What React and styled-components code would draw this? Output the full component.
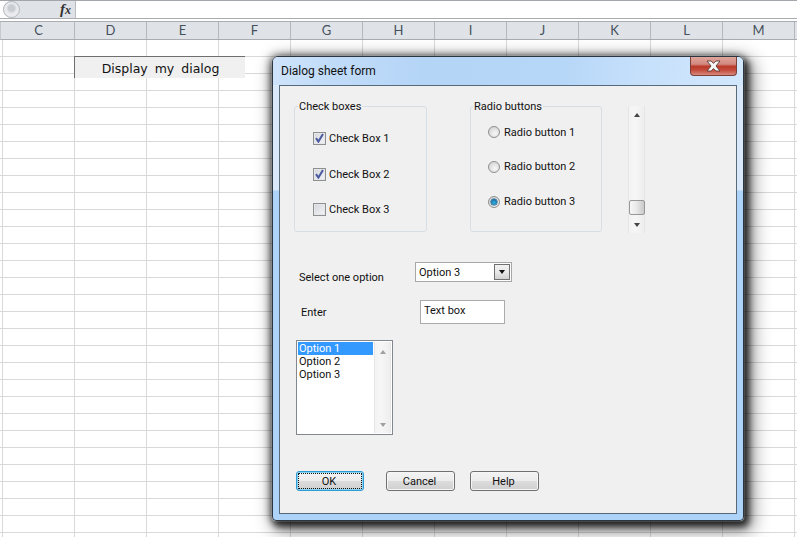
import styled, { createGlobalStyle } from "styled-components";

const UI_FONT = `Roboto, "Noto Sans", "Liberation Sans", sans-serif`;

const GlobalStyle = createGlobalStyle`
  html, body {
    margin: 0;
    background: #fff;
    overflow: hidden;
  }
  * {
    box-sizing: border-box;
  }
`;

const Page = styled.div`
  position: relative;
  width: 797px;
  height: 537px;
  overflow: hidden;
  background: #fff;
`;

// Excel chrome
const FormulaBar = styled.div`
  display: flex;
  height: 19px;
  border-top: 1px solid #a3a6aa;
  border-bottom: 1px solid #a9acb0;
`;

const NameBox = styled.div`
  display: flex;
  align-items: center;
  justify-content: space-between;
  width: 73px;
  margin-left: 3px;
  padding-right: 4px;
  background: #dfe2e7;
  border-right: 1px solid #b9bcc1;
  border-radius: 9px 0 0 9px;
`;

const Grip = styled.span`
  width: 17px;
  height: 17px;
  border-radius: 50%;
  border: 1px solid #b4b7bb;
  background: radial-gradient(circle at 50% 42%, #c9ccd0 0 3px, #e6e8eb 5px, #f1f2f4 100%);
`;

const Fx = styled.span`
  font: italic bold 15px "Liberation Serif", serif;
  color: #333;
  line-height: 15px;
`;

const FxSub = styled.span`
  font-size: 12px;
`;

const Gutter = styled.div`
  height: 3px;
  background: #fff;
  border-bottom: 1px solid #a9acb0;
`;

const HeaderRow = styled.div`
  display: flex;
  height: 18px;
  padding-left: 2px;
  background: #dfe3e8;
  border-bottom: 1px solid #a8abaf;
  border-left: 1px solid #c6c9cd;
`;

const HeaderCell = styled.div`
  flex: 0 0 72px;
  text-align: center;
  font: 13px/16px Lato, "Liberation Sans", sans-serif;
  color: #46505c;
  border-right: 1px solid #b4b8bd;
`;

const Sheet = styled.div`
  height: 497px;
  background-color: #fff;
  background-image: linear-gradient(to right, #d9d9d9 1px, transparent 1px),
    linear-gradient(to bottom, #d9d9d9 1px, transparent 1px);
  background-size: 72px 17px;
  background-position: 2px 16px;
`;

const SheetButton = styled.button`
  position: absolute;
  left: 74px;
  top: 56px;
  width: 171px;
  height: 22px;
  padding: 1px 0 0 1px;
  background: #f0f0f0;
  border: 0;
  border-top: 1px solid #6f6f6f;
  border-left: 1px solid #6f6f6f;
  font: 12.5px "DejaVu Sans", sans-serif;
  word-spacing: 3px;
  color: #111;
`;

// Dialog window
const Window = styled.div`
  position: absolute;
  left: 272px;
  top: 56px;
  width: 472px;
  height: 465px;
  padding: 0 6px 6px;
  border: 1px solid #2b3640;
  border-radius: 6px 6px 4px 4px;
  background: linear-gradient(180deg, #d9e9fa 0 133px, #aed3f8 134px);
  box-shadow: 0 0 0 1px rgba(255, 255, 255, 0.15), 3px 4px 7px 2px rgba(0, 0, 0, 0.75),
    5px 6px 18px 4px rgba(0, 0, 0, 0.45), -2px -1px 8px rgba(0, 0, 0, 0.4);
`;

const TitleBar = styled.div`
  display: flex;
  justify-content: space-between;
  height: 28px;
  margin: 0 -6px;
  padding: 0 6px 0 8px;
  border-radius: 5px 5px 0 0;
  background: linear-gradient(
    97deg,
    #cfe4fb 0,
    #c1dcf9 12%,
    #b5d5f7 32%,
    #b7d7f8 62%,
    #c6e0fb 78%,
    #d2e7fc 100%
  );
`;

const TitleText = styled.div`
  font: 12px/29px ${UI_FONT};
  color: #111;
`;

const CloseButton = styled.div`
  display: flex;
  align-items: center;
  justify-content: center;
  width: 47px;
  height: 19px;
  border: 1px solid #7b3f3a;
  border-top: 0;
  border-radius: 0 0 4px 4px;
  background: linear-gradient(
    180deg,
    #dfa69c 0,
    #d3887e 40%,
    #bb3a2b 52%,
    #c2493a 72%,
    #d98a7e 100%
  );
`;

const Client = styled.div`
  height: 429px;
  padding: 14px 0 0 14px;
  background: #f0f0f0;
  border: 1px solid #566a7c;
  font: 11px ${UI_FONT};
  color: #111;
`;

const TopRow = styled.div`
  display: flex;
  align-items: flex-start;
`;

const Group = styled.fieldset`
  width: ${(p) => p.$width}px;
  height: 132px;
  margin: 0 0 0 ${(p) => p.$offset}px;
  padding: 0;
  border: 1px solid #d5dfe5;
  border-radius: 3px;
  min-width: 0;
`;

const Legend = styled.legend`
  margin-left: ${(p) => p.$inset}px;
  padding: 0 1px;
  font: 11px/13px ${UI_FONT};
`;

const OptionList = styled.div`
  padding: ${(p) => p.$top}px 0 0 ${(p) => p.$left}px;
`;

const OptionRow = styled.label`
  display: flex;
  align-items: center;
  height: ${(p) => p.$height}px;
  gap: ${(p) => p.$gap}px;
`;

const CheckBox = styled.span`
  display: flex;
  align-items: center;
  justify-content: center;
  width: 13px;
  height: 13px;
  background: linear-gradient(135deg, #d4d6dc, #f4f4f6);
  border: 1px solid #8e8f8f;
  box-shadow: inset 0 0 0 1px #e6e7ea;
`;

const Radio = styled.span`
  display: flex;
  align-items: center;
  justify-content: center;
  width: 12px;
  height: 12px;
  border: 1px solid #8e8f8f;
  border-radius: 50%;
  background: radial-gradient(circle at 60% 65%, #f7f7f7, #cccccc);
  &::after {
    content: "";
    display: ${(p) => (p.$on ? "block" : "none")};
    width: 6px;
    height: 6px;
    border-radius: 50%;
    background: radial-gradient(circle at 50% 60%, #38b4e6, #0d5f96 80%);
    box-shadow: 0 0 0 0.5px #134f78;
  }
`;

const ScrollTrack = styled.div`
  display: flex;
  flex-direction: column;
  align-items: center;
  width: ${(p) => p.$width}px;
  height: ${(p) => p.$height}px;
  margin-left: ${(p) => p.$offset || 0}px;
  margin-top: ${(p) => p.$drop || 0}px;
  padding: ${(p) => p.$pad || 7}px 0 6px;
  background: linear-gradient(90deg, #f3f3f3, #f6f6f6 40%, #eeeeee);
  border-left: 1px solid #e6e6e6;
  border-right: 1px solid #e6e6e6;
`;

const Arrow = styled.span`
  width: 0;
  height: 0;
  border-left: 3.5px solid transparent;
  border-right: 3.5px solid transparent;
  ${(p) => (p.$dir === "up" ? "border-bottom" : "border-top")}: 4px solid ${(p) => p.$color};
`;

const ScrollFill = styled.div`
  flex: 1;
`;

const ScrollThumb = styled.div`
  width: 16px;
  height: 15px;
  margin-bottom: 8px;
  border: 1px solid #979797;
  border-radius: 2px;
  background: linear-gradient(90deg, #f6f6f6, #e9e9e9 45%, #c9c9c9);
`;

const FieldRow = styled.div`
  display: flex;
  align-items: flex-start;
  height: ${(p) => p.$height}px;
  margin-top: ${(p) => p.$top}px;
  padding-left: ${(p) => p.$indent}px;
`;

const FieldLabel = styled.label`
  width: ${(p) => p.$width}px;
  margin-top: ${(p) => p.$drop}px;
  line-height: 14px;
`;

const Combo = styled.div`
  display: flex;
  align-items: stretch;
  justify-content: space-between;
  width: 97px;
  height: 20px;
  background: #fff;
  border: 1px solid #a7a7a7;
  padding: 1px;
  line-height: 17px;
`;

const ComboValue = styled.span`
  padding-left: 2px;
`;

const ComboButton = styled.span`
  display: flex;
  align-items: center;
  justify-content: center;
  width: 16px;
  border: 1px solid #707070;
  background: linear-gradient(180deg, #f2f2f2, #e8e8e8 50%, #d0d0d0);
`;

const TextBox = styled.div`
  width: 85px;
  height: 24px;
  padding: 2px 0 0 3px;
  background: #fff;
  border: 1px solid #ababab;
  line-height: 15px;
`;

const ListBox = styled.div`
  display: flex;
  width: 97px;
  height: 95px;
  margin: 16px 0 0 2px;
  padding: 1px;
  background: #fff;
  border: 1px solid #828790;
`;

const ListItems = styled.div`
  flex: 1;
  line-height: 14px;
`;

const ListItem = styled.div`
  height: 13px;
  padding-left: 1px;
  margin-right: 1px;
  background: ${(p) => (p.$selected ? "#3399ff" : "transparent")};
  color: ${(p) => (p.$selected ? "#fff" : "#111")};
`;

const ButtonRow = styled.div`
  display: flex;
  margin: 36px 0 0 2px;
`;

const PushButton = styled.button`
  width: ${(p) => p.$width}px;
  height: 20px;
  margin-left: ${(p) => p.$offset || 0}px;
  padding: 0 2px 0 0;
  font: 11px ${UI_FONT};
  color: #111;
  border-radius: 3px;
  border: 1px solid ${(p) => (p.$focused ? "#2f9bd4" : "#707070")};
  background: linear-gradient(180deg, #f3f3f3 0, #ececec 48%, #dcdcdc 52%, #cfcfcf 100%);
  box-shadow: inset 0 0 0 1px ${(p) => (p.$focused ? "#86d3f3" : "#f6f6f6")};
  ${(p) => p.$focused && "outline: 1px dotted #111; outline-offset: -3px;"}
`;

const columns = ["C", "D", "E", "F", "G", "H", "I", "J", "K", "L", "M"];
const checks = [
  { label: "Check Box 1", on: true, height: 36 },
  { label: "Check Box 2", on: true, height: 36 },
  { label: "Check Box 3", on: false, height: 35 },
];
const radios = [
  { label: "Radio button 1", on: false, height: 34 },
  { label: "Radio button 2", on: false, height: 35 },
  { label: "Radio button 3", on: true, height: 35 },
];

const Tick = () => (
  <svg width="9" height="10" viewBox="0 0 9 10">
    <path d="M1 5.2 L3.4 8.6 L8 1" fill="none" stroke="#4a5aa0" strokeWidth="2" />
  </svg>
);

const CloseGlyph = () => (
  <svg width="17" height="12" viewBox="0 0 17 12">
    <path
      d="M2 1 H6.2 L8.5 3.4 L10.8 1 H15 L11 6 L15 11 H10.8 L8.5 8.6 L6.2 11 H2 L6 6 Z"
      fill="#f6f6f6"
      stroke="#5a3a3a"
      strokeWidth="0.9"
    />
  </svg>
);

export default function App() {
  return (
    <Page>
      <GlobalStyle />
      <FormulaBar>
        <NameBox>
          <Grip />
          <Fx>
            f<FxSub>x</FxSub>
          </Fx>
        </NameBox>
      </FormulaBar>
      <Gutter />
      <HeaderRow>
        {columns.map((c) => (
          <HeaderCell key={c}>{c}</HeaderCell>
        ))}
      </HeaderRow>
      <Sheet />
      <SheetButton>Display my dialog</SheetButton>

      <Window>
        <TitleBar>
          <TitleText>Dialog sheet form</TitleText>
          <CloseButton>
            <CloseGlyph />
          </CloseButton>
        </TitleBar>
        <Client>
          <TopRow>
            <Group $width={133} $offset={0}>
              <Legend $inset={3}>Check boxes</Legend>
              <OptionList $top={7} $left={18}>
                {checks.map((c) => (
                  <OptionRow key={c.label} $height={c.height} $gap={3}>
                    <CheckBox>{c.on && <Tick />}</CheckBox>
                    {c.label}
                  </OptionRow>
                ))}
              </OptionList>
            </Group>
            <Group $width={132} $offset={43}>
              <Legend $inset={2}>Radio buttons</Legend>
              <OptionList $top={2} $left={17}>
                {radios.map((r) => (
                  <OptionRow key={r.label} $height={r.height} $gap={4}>
                    <Radio $on={r.on} />
                    {r.label}
                  </OptionRow>
                ))}
              </OptionList>
            </Group>
            <ScrollTrack $width={17} $height={127} $offset={26} $drop={6}>
              <Arrow $dir="up" $color="#444" />
              <ScrollFill />
              <ScrollThumb />
              <Arrow $dir="down" $color="#444" />
            </ScrollTrack>
          </TopRow>

          <FieldRow $top={29} $indent={5} $height={20}>
            <FieldLabel $width={116} $drop={9}>
              Select one option
            </FieldLabel>
            <Combo>
              <ComboValue>Option 3</ComboValue>
              <ComboButton>
                <Arrow $dir="down" $color="#111" />
              </ComboButton>
            </Combo>
          </FieldRow>
          <FieldRow $top={18} $indent={7} $height={24}>
            <FieldLabel $width={119} $drop={6}>
              Enter
            </FieldLabel>
            <TextBox>Text box</TextBox>
          </FieldRow>

          <ListBox>
            <ListItems>
              <ListItem $selected>Option 1</ListItem>
              <ListItem>Option 2</ListItem>
              <ListItem>Option 3</ListItem>
            </ListItems>
            <ScrollTrack $width={17} $height={91} $pad={8}>
              <Arrow $dir="up" $color="#a0a0a0" />
              <ScrollFill />
              <Arrow $dir="down" $color="#a0a0a0" />
            </ScrollTrack>
          </ListBox>

          <ButtonRow>
            <PushButton $width={68} $focused>
              OK
            </PushButton>
            <PushButton $width={69} $offset={22}>
              Cancel
            </PushButton>
            <PushButton $width={69} $offset={15}>
              Help
            </PushButton>
          </ButtonRow>
        </Client>
      </Window>
    </Page>
  );
}
